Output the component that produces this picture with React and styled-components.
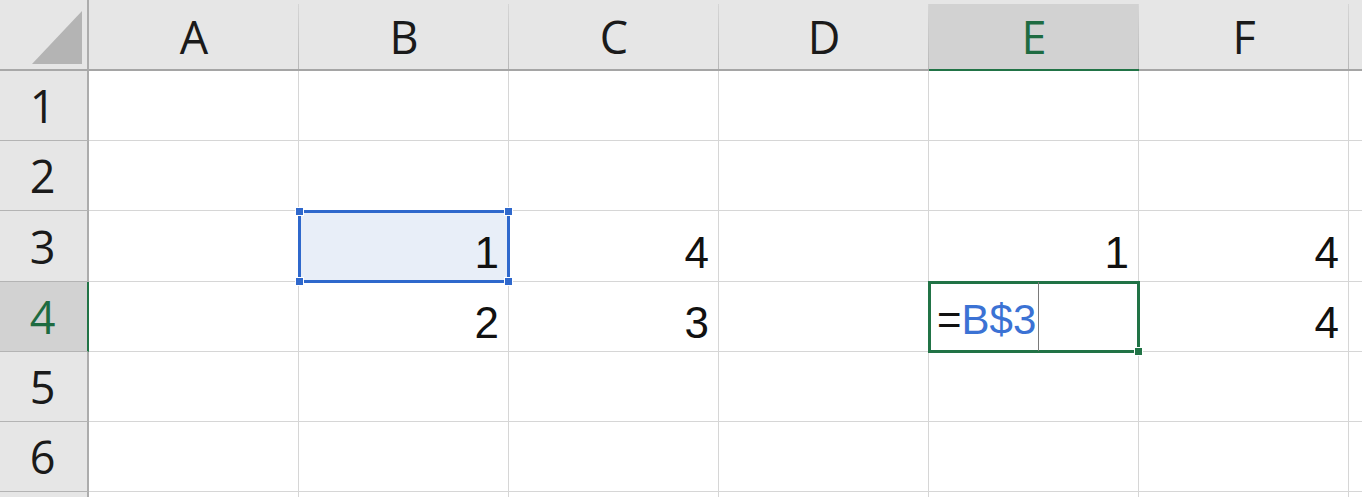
import React from 'react';
import styled, { createGlobalStyle, css } from 'styled-components';

const GlobalStyle = createGlobalStyle`
  html, body {
    margin: 0;
    padding: 0;
    background: #ffffff;
  }
`

const Sheet = styled.div`
  display: grid;
  grid-template-columns: 89px repeat(7, 210px);
  grid-template-rows: 71px 70px 70px 71px 70px 70px 70px 70px;
  width: 1362px;
  height: 497px;
  overflow: hidden;
  background: #ffffff;
  font-family: "Liberation Sans", Arial, sans-serif;
`

const Corner = styled.div`
  background: #e6e6e6;
  border-right: 2px solid #acacac;
  border-bottom: 2px solid #a8a8a8;
  box-sizing: border-box;
  display: flex;
  align-items: flex-end;
  justify-content: flex-end;
  padding: 0 4px 4px 0;
`

const ColHead = styled.div`
  position: relative;
  box-sizing: border-box;
  background: #e6e6e6;
  border-bottom: 2px solid ${p => (p.$active ? '#217346' : '#a5a5a5')};
  display: flex;
  align-items: center;
  justify-content: center;
  font-family: "Open Sans", "Liberation Sans", sans-serif;
  font-size: 45px;
  color: ${p => (p.$active ? '#1e6b41' : '#1a1a1a')};
  padding-top: 4px;

  &::before {
    content: '';
    position: absolute;
    left: 0;
    right: 0;
    top: 4px;
    bottom: 0;
    background: ${p => (p.$active ? '#d2d2d2' : 'transparent')};
    z-index: 0;
  }

  &::after {
    content: '';
    position: absolute;
    right: 0;
    top: 4px;
    bottom: 0;
    width: 1px;
    background: linear-gradient(#d6d6d6, #b8b8b8);
  }

  span {
    position: relative;
    z-index: 1;
  }
`

const RowHead = styled.div`
  box-sizing: border-box;
  background: ${p => (p.$active ? '#d2d2d2' : '#e6e6e6')};
  border-right: 2px solid ${p => (p.$active ? '#217346' : '#acacac')};
  border-bottom: 1px solid #b4b4b4;
  display: flex;
  align-items: center;
  justify-content: center;
  font-family: "Open Sans", "Liberation Sans", sans-serif;
  font-size: 45px;
  color: ${p => (p.$active ? '#1e6b41' : '#1a1a1a')};
  padding-right: 2px;
`

const Cell = styled.div`
  position: relative;
  box-sizing: border-box;
  border-right: 1px solid #d6d6d6;
  border-bottom: 1px solid #d6d6d6;
  display: flex;
  align-items: flex-end;
  justify-content: flex-end;
  padding: 0 9px 6px 0;
  font-size: 44px;
  line-height: 1;
  color: #111111;
  background: ${p => (p.$selected ? '#e8eef8' : '#ffffff')};
`

const Frame = styled.div`
  position: absolute;
  left: -1px;
  top: -1px;
  right: -2px;
  bottom: -2px;
  box-sizing: border-box;
  pointer-events: none;
  z-index: 2;
  ${p => p.$kind === 'ref' && css`
    border: 3px solid #2f68cc;
  `}
  ${p => p.$kind === 'edit' && css`
    border: 3px solid #217346;
  `}
`

const Handle = styled.span`
  position: absolute;
  width: 7px;
  height: 7px;
  background: ${p => p.$color};
  box-shadow: 0 0 0 1px #ffffff;
  ${p => (p.$v === 'top' ? 'top: -5px;' : 'bottom: -5px;')}
  ${p => (p.$h === 'left' ? 'left: -5px;' : 'right: -5px;')}
`

const Editor = styled.div`
  position: absolute;
  left: 8px;
  top: 0;
  bottom: 0;
  display: flex;
  align-items: stretch;
  font-size: 42px;
  line-height: 1;
  z-index: 3;
`

const Formula = styled.span`
  display: flex;
  align-items: center;
  padding-top: 6px;
`

const Eq = styled.span`
  color: #111111;
`

const Ref = styled.span`
  color: #3b72d4;
`

const Caret = styled.span`
  width: 1px;
  margin-left: 2px;
  background: #7a7a7a;
`

const columns = ['A', 'B', 'C', 'D', 'E', 'F', 'G'];

const data = {
  3: { B: '1', C: '4', E: '1', F: '4' },
  4: { B: '2', C: '3', F: '4' },
};

function Triangle() {
  return (
    <svg width="52" height="55" viewBox="0 0 52 55">
      <polygon points="1,54 51,54 51,1" fill="#b4b4b4" />
    </svg>
  );
}

export default function App() {
  const rows = [1, 2, 3, 4, 5, 6, 7];
  return (
    <>
      <GlobalStyle />
      <Sheet>
        <Corner><Triangle /></Corner>
        {columns.map(c => (
          <ColHead key={c} $active={c === 'E'}><span>{c === 'G' ? '' : c}</span></ColHead>
        ))}
        {rows.map(r => (
          <React.Fragment key={r}>
            <RowHead $active={r === 4}>{r < 7 ? r : ''}</RowHead>
            {columns.map(c => {
              const refCell = r === 3 && c === 'B';
              const editCell = r === 4 && c === 'E';
              return (
                <Cell key={c} $selected={refCell}>
                  {data[r] && data[r][c]}
                  {refCell && (
                    <Frame $kind="ref">
                      <Handle $color="#2f68cc" $v="top" $h="left" />
                      <Handle $color="#2f68cc" $v="top" $h="right" />
                      <Handle $color="#2f68cc" $v="bottom" $h="left" />
                      <Handle $color="#2f68cc" $v="bottom" $h="right" />
                    </Frame>
                  )}
                  {editCell && (
                    <>
                      <Editor>
                        <Formula><Eq>=</Eq><Ref>B$3</Ref></Formula>
                        <Caret />
                      </Editor>
                      <Frame $kind="edit">
                        <Handle $color="#217346" $v="bottom" $h="right" />
                      </Frame>
                    </>
                  )}
                </Cell>
              );
            })}
          </React.Fragment>
        ))}
      </Sheet>
    </>
  );
}
